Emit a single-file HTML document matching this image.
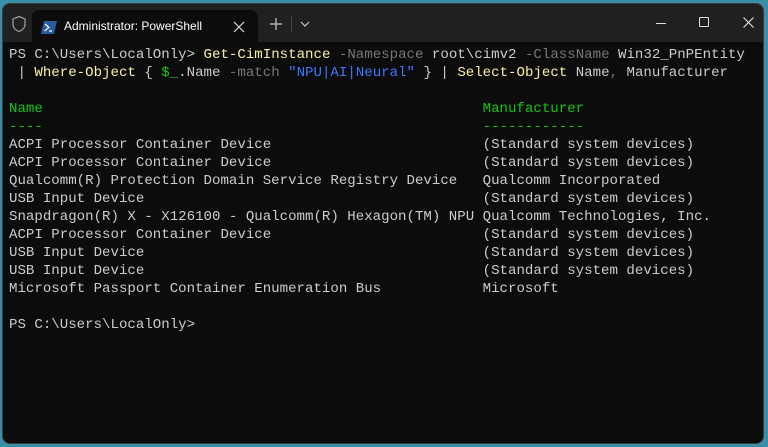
<!DOCTYPE html>
<html><head><style>
html,body{margin:0;padding:0;width:768px;height:447px;overflow:hidden;background:#3a8fa8;}
.win{position:absolute;left:2px;top:3px;width:762px;height:441px;background:#0c0c0c;border-radius:8px;overflow:hidden;border:1px solid #3a3a3a;box-sizing:border-box}
.tb{position:absolute;left:0;top:0;width:100%;height:38px;background:#202020}
.tab{position:absolute;left:29px;top:6px;width:226px;height:34px;background:#0c0c0c;border-radius:7px 7px 0 0}
.tt{position:absolute;left:32px;top:9px;font:12px "Liberation Sans",sans-serif;color:#fff}
.term{position:absolute;left:6px;top:42px;font-family:"Liberation Mono",monospace;font-size:14.1px;line-height:18px;color:#cccccc;white-space:pre}
.y{color:#f9f1a5}.g{color:#767676}.b{color:#3b78ff}.gr{color:#16c60c}
</style></head><body>
<div class="win">
<div class="tb"></div>
<svg style="position:absolute;left:8px;top:11px" width="16" height="18" viewBox="0 0 16 18"><path d="M8 1.5 L14 4 V9 C14 13 11 15.5 8 16.5 C5 15.5 2 13 2 9 V4 Z" fill="none" stroke="#9a9a9a" stroke-width="1.3"/></svg>
<div class="tab">
<svg style="position:absolute;left:9px;top:11px" width="16" height="13" viewBox="0 0 16 13"><path d="M3 0 H16 L13 13 H0 Z" fill="#2c5aa0"/><path d="M4 3 L8 6.5 L3.5 10 M8 10 H11" stroke="#fff" stroke-width="1.2" fill="none"/></svg>
<div class="tt">Administrator: PowerShell</div>
<svg style="position:absolute;left:201px;top:11px" width="12" height="12"><path d="M1 1 L11 11 M11 1 L1 11" stroke="#ddd" stroke-width="1.2"/></svg>
</div>
<svg style="position:absolute;left:267px;top:14px" width="12" height="12"><path d="M6 0 V12 M0 6 H12" stroke="#ccc" stroke-width="1.2"/></svg>
<div style="position:absolute;left:288px;top:12px;width:1px;height:16px;background:#444"></div>
<svg style="position:absolute;left:297px;top:17px" width="10" height="6"><path d="M1 1 L5 5 L9 1" stroke="#ccc" stroke-width="1.2" fill="none"/></svg>
<div style="position:absolute;left:653px;top:19px;width:10px;height:1px;background:#ddd"></div>
<div style="position:absolute;left:696px;top:13px;width:8px;height:8px;border:1.2px solid #ddd;border-radius:1px"></div>
<svg style="position:absolute;left:740px;top:13px" width="11" height="11"><path d="M0.5 0.5 L10.5 10.5 M10.5 0.5 L0.5 10.5" stroke="#ddd" stroke-width="1.2"/></svg>
<div class="term">PS C:\Users\LocalOnly> <span class="y">Get-CimInstance</span> <span class="g">-Namespace</span> root\cimv2 <span class="g">-ClassName</span> Win32_PnPEntity
 | <span class="y">Where-Object</span> { <span class="gr">$_</span>.Name <span class="g">-match</span> <span class="b">"NPU|AI|Neural"</span> } | <span class="y">Select-Object</span> Name<span class="g">,</span> Manufacturer

<span class="gr">Name                                                    Manufacturer
----                                                    ------------</span>
ACPI Processor Container Device                         (Standard system devices)
ACPI Processor Container Device                         (Standard system devices)
Qualcomm(R) Protection Domain Service Registry Device   Qualcomm Incorporated
USB Input Device                                        (Standard system devices)
Snapdragon(R) X - X126100 - Qualcomm(R) Hexagon(TM) NPU Qualcomm Technologies, Inc.
ACPI Processor Container Device                         (Standard system devices)
USB Input Device                                        (Standard system devices)
USB Input Device                                        (Standard system devices)
Microsoft Passport Container Enumeration Bus            Microsoft

PS C:\Users\LocalOnly></div>
</div>
</body></html>
